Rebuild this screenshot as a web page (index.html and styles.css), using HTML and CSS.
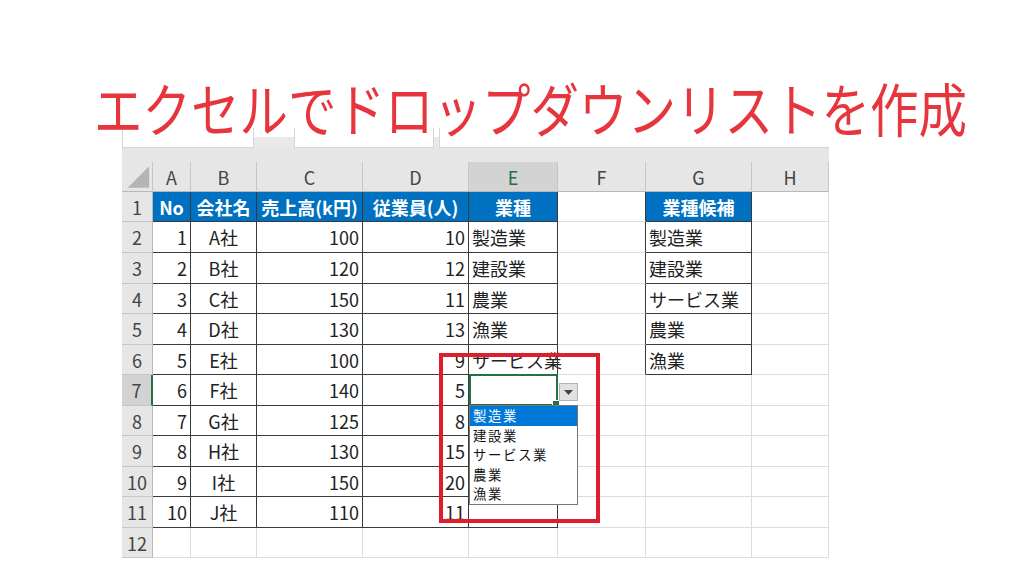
FILE: index.html
```html
<!DOCTYPE html>
<html lang="ja">
<head>
<meta charset="utf-8">
<title>エクセルでドロップダウンリストを作成</title>
<link rel="stylesheet" href="styles.css">
</head>
<body>
<div class="title"><span>エクセルでドロップダウンリストを作成</span></div>
<div class="strip">
  <div class="nb"></div>
  <div class="gap1"></div>
  <div class="fx"></div>
  <div class="gap2"></div>
  <div class="fb"></div>
</div>
<div class="sheet">
  <div class="band"></div>
  <div class="grid">
    <div class="c ch corner"><svg class="tri" width="31" height="30" viewBox="0 0 31 30"><polygon points="6,26 28,4 28,26" fill="#b4b4b4"/></svg></div>
    <div class="c ch">A</div><div class="c ch">B</div><div class="c ch">C</div><div class="c ch">D</div><div class="c ch sel">E</div><div class="c ch">F</div><div class="c ch">G</div><div class="c ch">H</div>

    <div class="c rh">1</div>
    <div class="c t hd">No</div><div class="c t hd">会社名</div><div class="c t hd">売上高(k円)</div><div class="c t hd">従業員(人)</div><div class="c t hd">業種</div><div class="c tr"></div><div class="c t hd">業種候補</div><div class="c"></div>

    <div class="c rh">2</div>
    <div class="c t r">1</div><div class="c t m">A社</div><div class="c t r">100</div><div class="c t r">10</div><div class="c t">製造業</div><div class="c tr"></div><div class="c t">製造業</div><div class="c"></div>

    <div class="c rh">3</div>
    <div class="c t r">2</div><div class="c t m">B社</div><div class="c t r">120</div><div class="c t r">12</div><div class="c t">建設業</div><div class="c tr"></div><div class="c t">建設業</div><div class="c"></div>

    <div class="c rh">4</div>
    <div class="c t r">3</div><div class="c t m">C社</div><div class="c t r">150</div><div class="c t r">11</div><div class="c t">農業</div><div class="c tr"></div><div class="c t">サービス業</div><div class="c"></div>

    <div class="c rh">5</div>
    <div class="c t r">4</div><div class="c t m">D社</div><div class="c t r">130</div><div class="c t r">13</div><div class="c t">漁業</div><div class="c tr"></div><div class="c t">農業</div><div class="c"></div>

    <div class="c rh">6</div>
    <div class="c t r">5</div><div class="c t m">E社</div><div class="c t r">100</div><div class="c t r">9</div><div class="c t ov">サービス業</div><div class="c tr"></div><div class="c t">漁業</div><div class="c"></div>

    <div class="c rh sel">7</div>
    <div class="c t r">6</div><div class="c t m">F社</div><div class="c t r">140</div><div class="c t r">5</div><div class="c t"></div><div class="c"></div><div class="c"></div><div class="c"></div>

    <div class="c rh">8</div>
    <div class="c t r">7</div><div class="c t m">G社</div><div class="c t r">125</div><div class="c t r">8</div><div class="c t"></div><div class="c"></div><div class="c"></div><div class="c"></div>

    <div class="c rh">9</div>
    <div class="c t r">8</div><div class="c t m">H社</div><div class="c t r">130</div><div class="c t r">15</div><div class="c t"></div><div class="c"></div><div class="c"></div><div class="c"></div>

    <div class="c rh">10</div>
    <div class="c t r">9</div><div class="c t m">I社</div><div class="c t r">150</div><div class="c t r">20</div><div class="c t"></div><div class="c"></div><div class="c"></div><div class="c"></div>

    <div class="c rh">11</div>
    <div class="c t r">10</div><div class="c t m">J社</div><div class="c t r">110</div><div class="c t r">11</div><div class="c t"></div><div class="c"></div><div class="c"></div><div class="c"></div>

    <div class="c rh">12</div>
    <div class="c"></div><div class="c"></div><div class="c"></div><div class="c"></div><div class="c"></div><div class="c"></div><div class="c"></div><div class="c"></div>
  </div>

  <div class="selbox"><div class="handle"></div></div>
  <div class="ddbtn"><svg width="9" height="5" viewBox="0 0 9 5"><polygon points="0,0 9,0 4.5,5" fill="#444"/></svg></div>
  <div class="ddlist">
    <div class="it on">製造業</div>
    <div class="it">建設業</div>
    <div class="it">サービス業</div>
    <div class="it">農業</div>
    <div class="it">漁業</div>
  </div>
  <div class="redbox"></div>
</div>
</body>
</html>
```
FILE: styles.css
```css
body {
  margin: 0;
  width: 1024px;
  height: 576px;
  overflow: hidden;
  background: #fff;
  font-family: "Noto Sans CJK JP", "Noto Sans", sans-serif;
}

.title {
  height: 128px;
  box-sizing: border-box;
  padding-top: 78px;
  padding-left: 94px;
}
.title span {
  display: inline-block;
  font-size: 48.5px;
  line-height: 48.5px;
  color: #e6353d;
  white-space: nowrap;
  transform: scaleY(1.19);
  transform-origin: left top;
}

.strip {
  display: flex;
  margin-left: 122px;
  width: 707px;
  height: 20px;
}
.strip .nb {
  width: 130px;
  border: 1px solid #d6d6d6;
  border-top: none;
}
.strip .gap1 {
  width: 40px;
  background: linear-gradient(#fff 45%, #e9e9e9 45%);
}
.strip .fx {
  width: 138px;
  border: 1px solid #d6d6d6;
  border-top: none;
}
.strip .gap2 {
  width: 5px;
  background: linear-gradient(#fff 45%, #e9e9e9 45%);
}
.strip .fb {
  flex: 1;
  border-left: 1px solid #d6d6d6;
  border-bottom: 1px solid #d6d6d6;
}

.sheet {
  position: relative;
  margin-left: 122px;
  width: 707px;
}
.band {
  height: 14px;
  background: #e6e6e6;
}
.grid {
  display: grid;
  grid-template-columns: 31px 38px 66px 106px 106px 89px 88px 106px 77px;
  grid-template-rows: 30px 30px 31px 31px 30px 31px 30px 31px 30px 31px 30px 31px 30px;
}
.c {
  box-sizing: border-box;
  border-right: 1px solid #dcdcdc;
  border-bottom: 1px solid #dcdcdc;
  display: flex;
  align-items: center;
  padding: 0 3px;
  font-size: 18px;
  color: #222;
  white-space: nowrap;
  min-width: 0;
}
.ch {
  background: #e6e6e6;
  border-right-color: #c6c6c6;
  border-bottom-color: #b8b8b8;
  justify-content: center;
  color: #444;
}
.corner {
  padding: 0;
  position: relative;
}
.corner .tri {
  display: block;
}
.rh {
  background: #e6e6e6;
  border-right-color: #b8b8b8;
  border-bottom-color: #c6c6c6;
  justify-content: center;
  color: #444;
  padding: 0;
}
.ch.sel {
  background: #d3d3d3;
  color: #2b6a45;
}
.rh.sel {
  background: #d3d3d3;
  border-right: 2px solid #217346;
}
.t {
  border-right-color: #3a3a3a;
  border-bottom-color: #3a3a3a;
}
.tr {
  border-right-color: #3a3a3a;
}
.hd {
  background: #0070c0;
  color: #fff;
  font-weight: bold;
  justify-content: center;
  padding: 0;
}
.r {
  justify-content: flex-end;
}
.m {
  justify-content: center;
}
.ov {
  overflow: visible;
}

.selbox {
  position: absolute;
  left: 347px;
  top: 226px;
  width: 89px;
  height: 32px;
  box-sizing: border-box;
  border: 2px solid #217346;
}
.handle {
  position: absolute;
  right: -4px;
  bottom: -4px;
  width: 6px;
  height: 6px;
  background: #217346;
  border: 1px solid #fff;
}
.ddbtn {
  position: absolute;
  left: 437px;
  top: 235px;
  width: 19px;
  height: 18px;
  box-sizing: border-box;
  background: #e1e1e1;
  border: 1px solid #b3b3b3;
  display: flex;
  align-items: center;
  justify-content: center;
}
.ddlist {
  position: absolute;
  left: 347px;
  top: 257px;
  width: 109px;
  height: 100px;
  box-sizing: border-box;
  background: #fff;
  border: 1px solid #767676;
}
.it {
  height: 19.5px;
  line-height: 19.5px;
  padding-left: 3px;
  font-size: 13.4px;
  letter-spacing: 1.6px;
  color: #111;
  white-space: nowrap;
}
.it.on {
  background: #0078d7;
  color: #fff;
}
.redbox {
  position: absolute;
  left: 317px;
  top: 205px;
  width: 161px;
  height: 170px;
  box-sizing: border-box;
  border: 4px solid #dc1f2b;
}
```
